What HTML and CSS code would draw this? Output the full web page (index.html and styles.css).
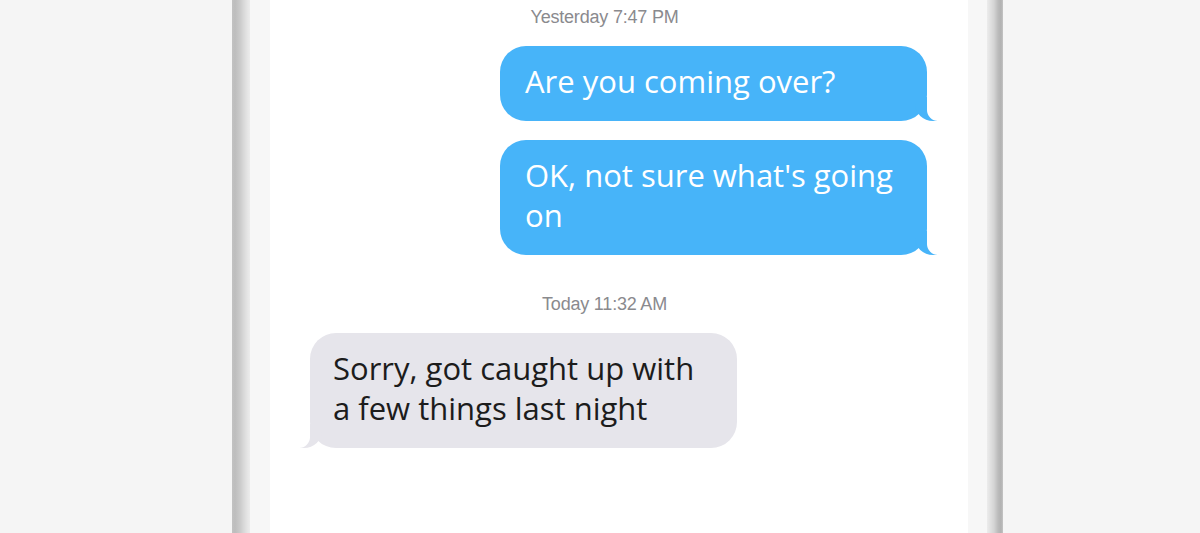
FILE: index.html
```html
<!DOCTYPE html>
<html lang="en">
<head>
    <meta charset="UTF-8">
    <meta name="viewport" content="width=device-width, initial-scale=1.0">
    <title>Messages</title>
    <link rel="stylesheet" href="styles.css">
</head>
<body>
    <div class="phone">
        <div class="screen">
            <div class="thread">
                <div class="stamp">Yesterday 7:47 PM</div>
                <div class="bubble sent">Are you coming over?</div>
                <div class="bubble sent">OK, not sure what's going on</div>

                <div class="stamp today">Today 11:32 AM</div>
                <div class="bubble received">Sorry, got caught up with a few things last night</div>
            </div>
        </div>
    </div>
</body>
</html>
```

FILE: styles.css
```css
body {
    margin: 0;
    padding: 0;
    background-color: #f5f5f5;
    font-family: "Open Sans", Arial, sans-serif;
    display: flex;
    justify-content: flex-start;
    height: 533px;
    overflow: hidden;
}

/* outer metal rim of the phone */
.phone {
    margin-left: 232px;
    width: 771px;
    height: 533px;
    box-sizing: border-box;
    padding: 0 16px 0 18px;
    background: linear-gradient(90deg,
        #c2c2c2 0px, #bdbdbd 3px, #cacaca 8px, #d6d6d6 11px, #e4e4e4 15px, #ececec 18px,
        #ececec 755px, #e2e2e2 758px, #d4d4d4 762px, #bcbcbc 766px, #b2b2b2 769px, #c4c4c4 771px);
}

.screen {
    height: 100%;
    box-sizing: border-box;
    padding: 0 19px 0 20px;
    background-color: #f7f7f7;
}

.thread {
    height: 100%;
    box-sizing: border-box;
    background-color: #ffffff;
    padding: 7px 31px 0 30px;
    display: flex;
    flex-direction: column;
}

.stamp {
    font-family: "Liberation Sans", Arial, sans-serif;
    font-size: 18px;
    line-height: 20px;
    color: #8a8a8e;
    text-align: center;
    padding-right: 28px;
    letter-spacing: -0.2px;
    margin-bottom: 19px;
}

.stamp.today {
    margin-top: 20px;
}

.bubble {
    position: relative;
    width: 427px;
    box-sizing: border-box;
    padding: 15px 18px 20px 25px;
    border-radius: 26px;
    font-size: 31px;
    line-height: 40px;
}

.sent {
    align-self: flex-end;
    margin-right: 10px;
    margin-bottom: 19px;
    background-color: #47b4f9;
    color: #ffffff;
}

.received {
    align-self: flex-start;
    margin-left: 10px;
    background-color: #e6e5eb;
    color: #1c1c1c;
    padding-left: 23px;
}

/* tails */
.sent::before,
.received::before {
    content: "";
    position: absolute;
    bottom: 0;
    width: 22px;
    height: 24px;
    background-color: inherit;
}

.sent::after,
.received::after {
    content: "";
    position: absolute;
    bottom: 0;
    width: 12px;
    height: 24px;
    background-color: #ffffff;
}

.sent::before {
    right: -10px;
    border-bottom-left-radius: 18px 17px;
}

.sent::after {
    right: -12px;
    border-bottom-left-radius: 11px;
}

.received::before {
    left: -10px;
    border-bottom-right-radius: 18px 17px;
}

.received::after {
    left: -12px;
    border-bottom-right-radius: 11px;
}
```
